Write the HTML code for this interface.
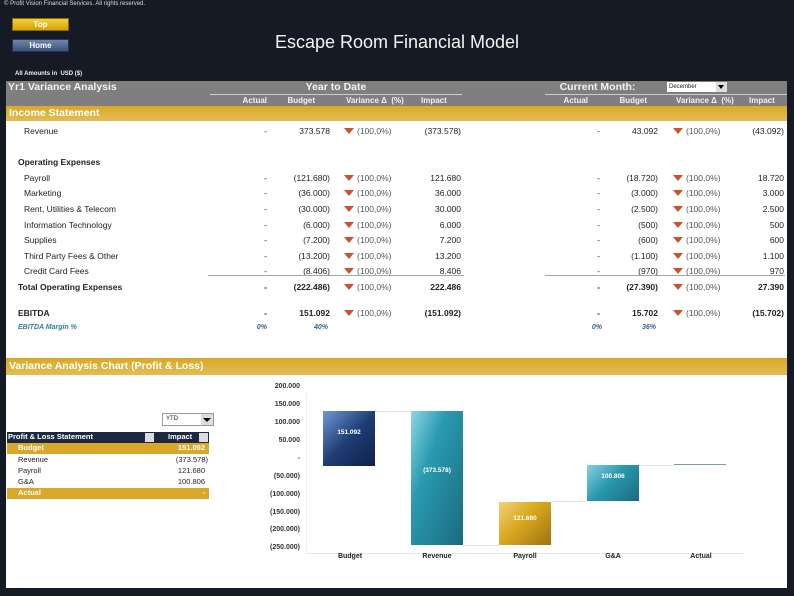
<!DOCTYPE html>
<html><head><meta charset="utf-8"><style>
*{margin:0;padding:0;box-sizing:border-box}
body{width:794px;height:596px;background:#161a24;font-family:"Liberation Sans",sans-serif;position:relative;overflow:hidden;color:#222}
.a{position:absolute;white-space:nowrap}
.r{position:absolute;text-align:right;white-space:nowrap}
.t{font-size:8.5px}
.tri{position:absolute;width:0;height:0;border-left:5px solid transparent;border-right:5px solid transparent;border-top:6px solid #c9542c}
.hd{color:#f2f2f2;font-weight:bold;font-size:8px}
.gold{background:linear-gradient(#d9a826,#e2bd55)}
.bar{position:absolute;color:#fff;font-size:6.5px;font-weight:bold;text-align:center}
.ax{position:absolute;width:40px;text-align:right;font-size:7px;font-weight:bold;color:#333;left:260px}
.cat{position:absolute;width:60px;text-align:center;font-size:7px;font-weight:bold;color:#222}
.cn{position:absolute;height:1px;background:#e4e4e4}
</style></head><body>
<div class="a" style="left:4px;top:1px;font-size:6px;color:#ddd">© Profit Vision Financial Services. All rights reserved.</div>
<div class="a" style="left:12px;top:18px;width:57px;height:13px;background:linear-gradient(#f5d033,#d2a20c);border:1px solid #8a6a00;color:#fff;font-size:8px;font-weight:bold;text-align:center;line-height:11px">Top</div>
<div class="a" style="left:12px;top:39px;width:57px;height:13px;background:linear-gradient(#6f86ab,#3d5278);border:1px solid #263550;color:#fff;font-size:8px;font-weight:bold;text-align:center;line-height:11px">Home</div>
<div class="a" style="left:0;width:794px;top:32px;text-align:center;font-size:18px;color:#f4f4f4">Escape Room Financial Model</div>
<div class="a" style="left:15px;top:71px;font-size:6px;font-weight:bold;color:#eee">All Amounts in&nbsp; USD ($)</div>

<div class="a" style="left:6px;top:81px;width:781px;height:507px;background:#fff"></div>
<div class="a" style="left:6px;top:81px;width:781px;height:25px;background:#7f7f7f"></div>
<div class="a" style="left:8px;top:81px;color:#f2f2f2;font-weight:bold;font-size:10.5px">Yr1 Variance Analysis</div>
<div class="a" style="left:210px;width:252px;top:81px;text-align:center;color:#f2f2f2;font-weight:bold;font-size:10.5px">Year to Date</div>
<div class="a" style="left:210px;top:94px;width:252px;height:1px;background:#ccc"></div>
<div class="a" style="left:545px;top:81px;width:105px;text-align:center;color:#f2f2f2;font-weight:bold;font-size:10.5px">Current Month:</div>
<div class="a" style="left:545px;top:94px;width:242px;height:1px;background:#ccc"></div>
<div class="a" style="left:667px;top:82px;width:60px;height:10px;background:#fff;font-size:6px;line-height:10px;padding-left:2px">December</div>
<div class="a" style="left:716px;top:82px;width:11px;height:10px;background:#ddd"><div class="a" style="left:2px;top:3px;border-left:3.5px solid transparent;border-right:3.5px solid transparent;border-top:4px solid #000"></div></div>
<div class="r hd" style="left:200px;width:67px;top:96px">Actual</div>
<div class="r hd" style="left:260px;width:55px;top:96px">Budget</div>
<div class="a hd" style="left:346px;top:96px">Variance Δ&nbsp; (%)</div>
<div class="a hd" style="left:421px;top:96px">Impact</div>
<div class="r hd" style="left:530px;width:58px;top:96px">Actual</div>
<div class="r hd" style="left:590px;width:57px;top:96px">Budget</div>
<div class="a hd" style="left:676px;top:96px">Variance Δ&nbsp; (%)</div>
<div class="a hd" style="left:749px;top:96px">Impact</div>
<div class="a gold" style="left:6px;top:106px;width:781px;height:15px"></div>
<div class="a" style="left:9px;top:107px;color:#fff;font-weight:bold;font-size:10.5px">Income Statement</div>

<div id="rows"></div>
<div class="a t" style="left:24px;top:126px">Revenue</div>
<div class="a t" style="left:18px;top:157px;font-weight:bold">Operating Expenses</div>
<div class="a t" style="left:24px;top:173px">Payroll</div>
<div class="a t" style="left:24px;top:188px">Marketing</div>
<div class="a t" style="left:24px;top:204px">Rent, Utilities &amp; Telecom</div>
<div class="a t" style="left:24px;top:220px">Information Technology</div>
<div class="a t" style="left:24px;top:235px">Supplies</div>
<div class="a t" style="left:24px;top:251px">Third Party Fees &amp; Other</div>
<div class="a t" style="left:24px;top:266px">Credit Card Fees</div>
<div class="a t" style="left:18px;top:282px;font-weight:bold">Total Operating Expenses</div>
<div class="a t" style="left:18px;top:308px;font-weight:bold">EBITDA</div>
<div class="a t" style="left:18px;top:324px;font-weight:bold;font-style:italic;color:#2f7f9a;font-size:7px">EBITDA Margin %</div>
<div class="a" style="left:208px;top:275px;width:256px;height:1px;background:#9aa"></div>
<div class="a" style="left:545px;top:275px;width:240px;height:1px;background:#9aa"></div>
<script>
var R=[[126,"373.578","(373.578)","43.092","(43.092)",0],
[173,"(121.680)","121.680","(18.720)","18.720",0],
[188,"(36.000)","36.000","(3.000)","3.000",0],
[204,"(30.000)","30.000","(2.500)","2.500",0],
[220,"(6.000)","6.000","(500)","500",0],
[235,"(7.200)","7.200","(600)","600",0],
[251,"(13.200)","13.200","(1.100)","1.100",0],
[266,"(8.406)","8.406","(970)","970",0],
[282,"(222.486)","222.486","(27.390)","27.390",1],
[308,"151.092","(151.092)","15.702","(15.702)",1]];
var h="";
R.forEach(function(r){var y=r[0],b=r[5]?"font-weight:bold;":"";
h+='<div class="r t" style="left:230px;width:37px;top:'+y+'px;'+b+'">-</div>';
h+='<div class="r t" style="left:270px;width:60px;top:'+y+'px;'+b+'">'+r[1]+'</div>';
h+='<div class="tri" style="left:344px;top:'+(y+2)+'px"></div>';
h+='<div class="a t" style="left:357px;top:'+y+'px;color:#555">(100,0%)</div>';
h+='<div class="r t" style="left:400px;width:61px;top:'+y+'px;'+b+'">'+r[2]+'</div>';
h+='<div class="r t" style="left:560px;width:40px;top:'+y+'px;'+b+'">-</div>';
h+='<div class="r t" style="left:598px;width:60px;top:'+y+'px;'+b+'">'+r[3]+'</div>';
h+='<div class="tri" style="left:673px;top:'+(y+2)+'px"></div>';
h+='<div class="a t" style="left:686px;top:'+y+'px;color:#555">(100,0%)</div>';
h+='<div class="r t" style="left:720px;width:64px;top:'+y+'px;'+b+'">'+r[4]+'</div>';});
document.getElementById("rows").innerHTML=h;
</script>
<div class="r" style="left:230px;width:37px;top:324px;font-size:7px;font-weight:bold;font-style:italic;color:#2f5f8a">0%</div>
<div class="r" style="left:270px;width:58px;top:324px;font-size:7px;font-weight:bold;font-style:italic;color:#2f5f8a">40%</div>
<div class="r" style="left:560px;width:42px;top:324px;font-size:7px;font-weight:bold;font-style:italic;color:#2f5f8a">0%</div>
<div class="r" style="left:598px;width:58px;top:324px;font-size:7px;font-weight:bold;font-style:italic;color:#2f5f8a">36%</div>

<div class="a gold" style="left:6px;top:358px;width:781px;height:17px"></div>
<div class="a" style="left:9px;top:360px;color:#fff;font-weight:bold;font-size:10.5px">Variance Analysis Chart (Profit &amp; Loss)</div>

<div class="a" style="left:162px;top:413px;width:52px;height:13px;border:1px solid #999;background:#fff;font-size:6px;line-height:11px;padding-left:3px">YTD</div>
<div class="a" style="left:201px;top:414px;width:12px;height:11px;background:#ddd"><div class="a" style="left:2px;top:4px;border-left:4px solid transparent;border-right:4px solid transparent;border-top:4px solid #000"></div></div>
<div class="a" style="left:7px;top:432px;width:202px;height:11px;background:#1d2940"></div>
<div class="a" style="left:8px;top:432px;color:#fff;font-weight:bold;font-size:7.5px">Profit &amp; Loss Statement</div>
<div class="a" style="left:145px;top:433px;width:9px;height:9px;background:#ddd"></div>
<div class="a" style="left:168px;top:432px;color:#fff;font-weight:bold;font-size:7.5px">Impact</div>
<div class="a" style="left:199px;top:433px;width:9px;height:9px;background:#ddd"></div>
<div class="a" style="left:7px;top:443px;width:202px;height:11px;background:#d9a828"></div>
<div class="a" style="left:18px;top:443px;color:#fff;font-weight:bold;font-size:7.5px">Budget</div>
<div class="r" style="left:120px;width:85px;top:443px;color:#fff;font-weight:bold;font-size:7.5px">151.092</div>
<div class="a" style="left:18px;top:455px;font-size:7.5px">Revenue</div>
<div class="r" style="left:120px;width:88px;top:455px;font-size:7.5px">(373.578)</div>
<div class="a" style="left:18px;top:466px;font-size:7.5px">Payroll</div>
<div class="r" style="left:120px;width:85px;top:466px;font-size:7.5px">121.680</div>
<div class="a" style="left:18px;top:477px;font-size:7.5px">G&amp;A</div>
<div class="r" style="left:120px;width:85px;top:477px;font-size:7.5px">100.806</div>
<div class="a" style="left:7px;top:488px;width:202px;height:11px;background:#d9a828"></div>
<div class="a" style="left:18px;top:488px;color:#fff;font-weight:bold;font-size:7.5px">Actual</div>
<div class="r" style="left:120px;width:85px;top:488px;color:#fff;font-weight:bold;font-size:7.5px">-</div>

<div class="ax" style="top:383px">200.000</div>
<div class="ax" style="top:401px">150.000</div>
<div class="ax" style="top:419px">100.000</div>
<div class="ax" style="top:437px">50.000</div>
<div class="ax" style="top:455px">-</div>
<div class="ax" style="top:473px">(50.000)</div>
<div class="ax" style="top:491px">(100.000)</div>
<div class="ax" style="top:509px">(150.000)</div>
<div class="ax" style="top:526px">(200.000)</div>
<div class="ax" style="top:544px">(250.000)</div>
<div class="a" style="left:306px;top:393px;width:1px;height:158px;background:#eee"></div>
<div class="a" style="left:306px;top:553px;width:437px;height:1px;background:#e6e6e6"></div>
<div class="cn" style="left:375px;top:411px;width:36px"></div>
<div class="cn" style="left:463px;top:545px;width:36px"></div>
<div class="cn" style="left:551px;top:501px;width:36px"></div>
<div class="cn" style="left:638px;top:465px;width:36px"></div>
<div class="bar" style="left:323px;top:411px;width:52px;height:55px;background:linear-gradient(135deg,#6f9ad6,#1f3d75 50%,#0f2148);padding-top:18px">151.092</div>
<div class="bar" style="left:411px;top:411px;width:52px;height:134px;background:linear-gradient(110deg,#8fd6e6,#2a9ab0 35%,#1a6a80);padding-top:56px">(373.578)</div>
<div class="bar" style="left:499px;top:502px;width:52px;height:43px;background:linear-gradient(135deg,#f0d27a,#d9a71e 45%,#9c7412);padding-top:13px">121.680</div>
<div class="bar" style="left:587px;top:465px;width:52px;height:36px;background:linear-gradient(135deg,#86d2e2,#2a98ae 45%,#1a6a80);padding-top:8px">100.806</div>
<div class="a" style="left:674px;top:464px;width:52px;height:1px;background:#7a9aa8"></div>
<div class="cat" style="left:320px;top:553px">Budget</div>
<div class="cat" style="left:407px;top:553px">Revenue</div>
<div class="cat" style="left:495px;top:553px">Payroll</div>
<div class="cat" style="left:583px;top:553px">G&amp;A</div>
<div class="cat" style="left:671px;top:553px">Actual</div>
</body></html>
